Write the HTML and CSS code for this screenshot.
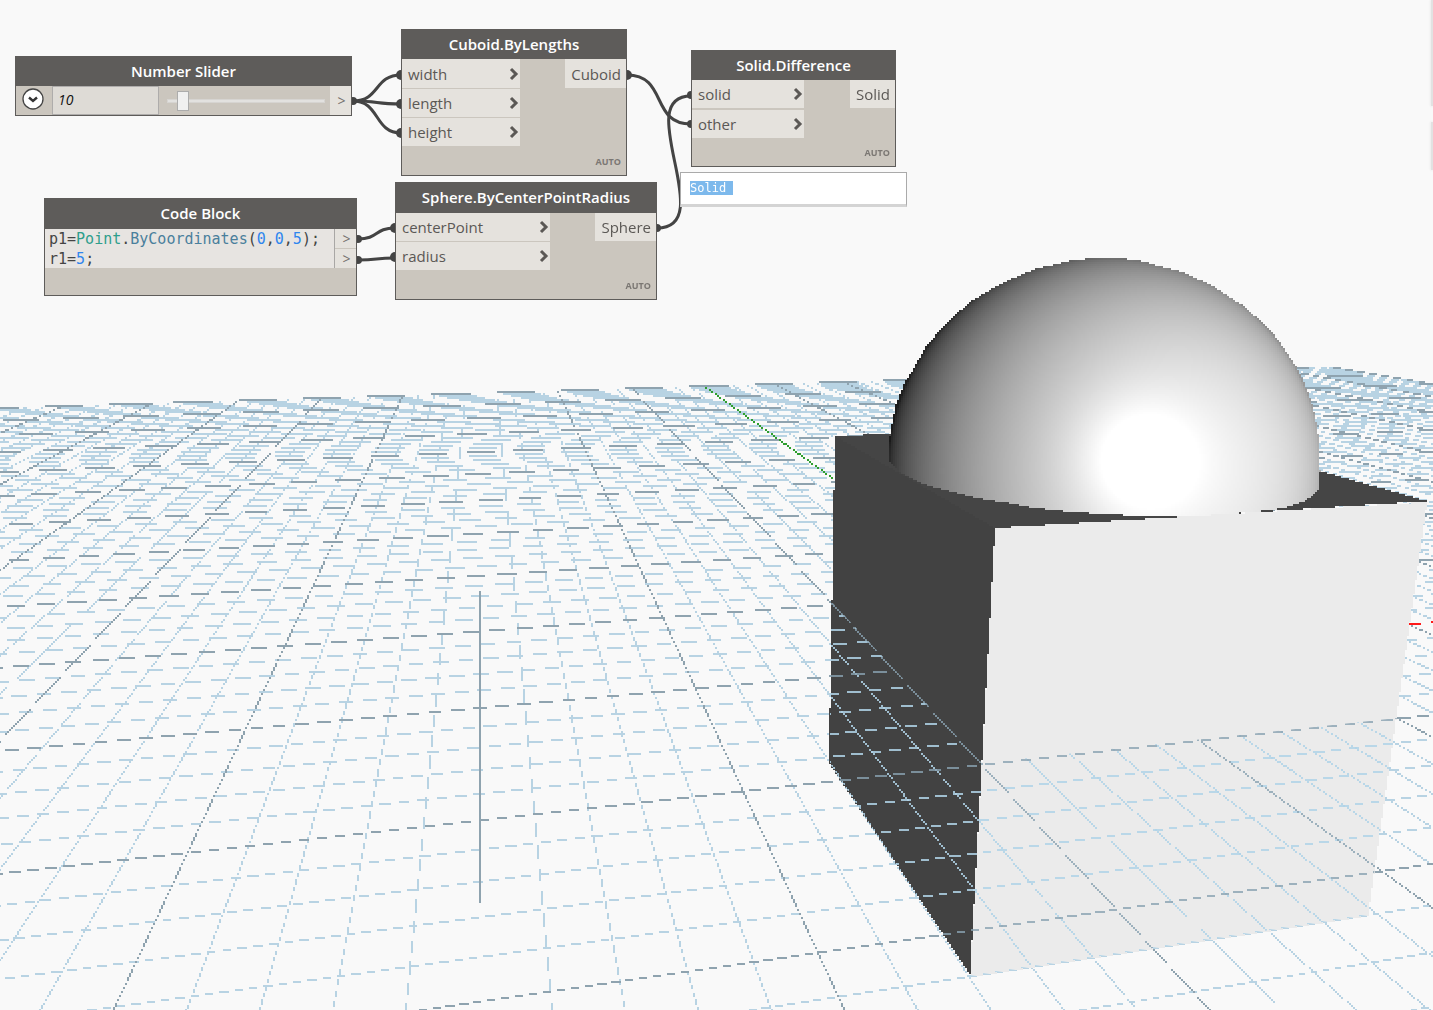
FILE: index.html
```html
<!DOCTYPE html>
<html lang="en">
<head>
<meta charset="utf-8">
<title>Solid.Difference graph</title>
<link rel="stylesheet" href="styles.css">
</head>
<body>
<main class="workspace">
  <canvas class="scene" aria-label="3D preview"></canvas>
  <div class="side-tabs"><span class="side-tab long"></span><span class="side-tab"></span></div>
  <svg class="wires" aria-hidden="true">
    <g class="wire">
      <path d="M353 101C380 101 374 75 401 75"/>
      <path d="M353 101C380 101 374 104 401 104"/>
      <path d="M353 101C380 101 374 133 401 133"/>
      <path d="M358 239C379 239 374 228 395 228"/>
      <path d="M358 260C379 260 374 258 395 258"/>
      <path d="M627 75C668 75 650 124 691 124"/>
      <path d="M657 228C720 228 630 96 691 96"/>
    </g>
    <g class="wire-end">
      <circle cx="353" cy="101" r="4"/><circle cx="358" cy="239" r="4"/><circle cx="358" cy="260" r="4"/>
      <circle cx="401" cy="75" r="5"/><circle cx="401" cy="104" r="5"/><circle cx="401" cy="133" r="5"/>
      <circle cx="395" cy="228" r="5"/><circle cx="395" cy="257" r="5"/>
      <circle cx="627" cy="75" r="5"/><circle cx="657" cy="228" r="4"/>
      <circle cx="691" cy="95" r="4"/><circle cx="691" cy="124" r="4"/>
    </g>
  </svg>

  <section class="node node-slider">
    <h2 class="node-title">Number Slider</h2>
    <div class="slider-body">
      <button class="expander" aria-label="Expand">
        <svg viewBox="0 0 22 22"><circle cx="11" cy="11" r="10" fill="#fff" stroke="#444" stroke-width="1.3"/><path d="M7 9.500L11 13L15 9.500" fill="none" stroke="#333" stroke-width="2.4"/></svg>
      </button>
      <input class="slider-value" type="text" value="10" aria-label="Value">
      <input class="slider-range" type="range" min="0" max="100" value="6" aria-label="Slider">
      <span class="port-arrow">&gt;</span>
    </div>
  </section>

  <section class="node node-code">
    <h2 class="node-title tall">Code Block</h2>
    <div class="code-body">
      <pre class="code">p1=<b>Point</b>.<i>ByCoordinates</i>(<u>0</u>,<u>0</u>,<u>5</u>);
r1=<u>5</u>;</pre>
      <div class="code-ports"><span class="port-arrow">&gt;</span><span class="port-arrow">&gt;</span></div>
    </div>
  </section>

  <section class="node node-cuboid">
    <h2 class="node-title">Cuboid.ByLengths</h2>
    <div class="node-body">
      <ul class="inputs">
        <li>width<svg class="chevron" viewBox="0 0 10 14"><path d="M2 2L7 7L2 12"/></svg></li>
        <li>length<svg class="chevron" viewBox="0 0 10 14"><path d="M2 2L7 7L2 12"/></svg></li>
        <li>height<svg class="chevron" viewBox="0 0 10 14"><path d="M2 2L7 7L2 12"/></svg></li>
      </ul>
      <span class="output">Cuboid</span>
    </div>
    <footer class="lacing">AUTO</footer>
  </section>

  <section class="node node-sphere">
    <h2 class="node-title tall">Sphere.ByCenterPointRadius</h2>
    <div class="node-body">
      <ul class="inputs">
        <li>centerPoint<svg class="chevron" viewBox="0 0 10 14"><path d="M2 2L7 7L2 12"/></svg></li>
        <li>radius<svg class="chevron" viewBox="0 0 10 14"><path d="M2 2L7 7L2 12"/></svg></li>
      </ul>
      <span class="output">Sphere</span>
    </div>
    <footer class="lacing">AUTO</footer>
  </section>

  <section class="node node-solid">
    <h2 class="node-title">Solid.Difference</h2>
    <div class="node-body">
      <ul class="inputs">
        <li>solid<svg class="chevron" viewBox="0 0 10 14"><path d="M2 2L7 7L2 12"/></svg></li>
        <li>other<svg class="chevron" viewBox="0 0 10 14"><path d="M2 2L7 7L2 12"/></svg></li>
      </ul>
      <span class="output">Solid</span>
    </div>
    <footer class="lacing">AUTO</footer>
  </section>

  <input class="preview" type="text" value="Solid " aria-label="Preview value">
</main>
<script src="scene.js"></script>
</body>
</html>
```
FILE: styles.css
```css
* { box-sizing: border-box; }
body { margin: 0; background: #f9f9f9; font-family: "Open Sans", "Noto Sans", sans-serif; font-size: 15px; color: #5b5855; }
.workspace { position: relative; height: 100vh; overflow: hidden; }
.scene, .wires { position: absolute; inset: 0; width: 100%; height: 100%; }
.wire { fill: none; stroke: #444; stroke-width: 3; }
.wire-end { fill: #444; }

.side-tabs { position: absolute; top: 0; right: 0; display: grid; gap: 16px; }
.side-tab { width: 2px; height: 48px; background: #e2e2e2; box-shadow: 0 0 3px #ddd; }
.side-tab.long { height: 106px; }

.node { position: absolute; display: flex; flex-direction: column; background: #cbc6be; border: 1px solid #5e5c5a; }
.node-slider { left: 15px; top: 56px; width: 337px; height: 60px; }
.node-code { left: 44px; top: 198px; width: 313px; height: 98px; }
.node-cuboid { left: 401px; top: 29px; width: 226px; height: 147px; }
.node-sphere { left: 395px; top: 182px; width: 262px; height: 118px; }
.node-solid { left: 691px; top: 50px; width: 205px; height: 117px; }

.node-title { margin: 0; height: 29px; flex: none; background: #5e5c5a; color: #fff; font-size: 15px; font-weight: 600; line-height: 29px; text-align: center; }
.node-title.tall { height: 30px; }

.node-body { display: flex; justify-content: space-between; align-items: flex-start; }
.inputs { margin: 0; padding: 0; list-style: none; display: grid; gap: 1px; }
.inputs li { display: flex; justify-content: space-between; align-items: center; height: 28px; padding: 0 1px 0 6px; background: #e5e2dd; }
.node-cuboid .inputs li, .node-cuboid .output { height: 29px; line-height: 30px; }
.node-cuboid .inputs { width: 118px; gap: 0; }
.node-cuboid .inputs li + li { border-top: 1px solid #cbc6be; }
.node-sphere .inputs { width: 154px; }
.node-solid .inputs { width: 112px; gap: 2px; }
.output { height: 28px; padding: 0 5px 0 6px; line-height: 28px; background: #e5e2dd; }
.chevron { width: 10px; height: 14px; fill: none; stroke: #5b5855; stroke-width: 3; }
.lacing { margin-top: auto; padding: 0 5px 6px; line-height: 14px; font-size: 9px; font-weight: 700; text-align: right; color: #7b7773; }

.slider-body { display: flex; height: 29px; }
.expander { display: flex; align-items: flex-start; width: 36px; padding: 2px 0 0 6px; border: 0; background: none; }
.expander svg { display: block; width: 22px; height: 22px; }
.slider-value { width: 107px; padding: 0 5px 2px; border: 1px solid #aeacab; background: #dedbd6; font: italic 14px "Open Sans", sans-serif; color: #111; }
.slider-range { flex: 1; min-width: 0; margin: 0 5px 0 8px; appearance: none; background: none; }
.slider-range::-webkit-slider-runnable-track { height: 4px; background: #e2e1df; border: 1px solid #d6d4d1; }
.slider-range::-webkit-slider-thumb { appearance: none; width: 12px; height: 20px; margin-top: -9px; background: #f0f0f0; border: 1px solid #acacac; }
.port-arrow { width: 21px; padding: 1px 0 0 2px; background: #e5e2dd; font-size: 14px; line-height: 28px; text-align: center; color: #74716e; }

.code-body { display: flex; }
.code { flex: 1; margin: 0; padding-left: 4px; height: 39px; background: #e7e4e1; border-right: 1px solid #a9a7a5; font: 15px/20px "DejaVu Sans Mono", monospace; color: #444; }
.code b { font-weight: 400; color: #2f9e8c; }
.code i { font-style: normal; color: #4a7f9c; }
.code u { text-decoration: none; color: #2f86ee; }
.code-ports { display: grid; gap: 1px; }
.code-ports .port-arrow { height: 19px; padding: 0 0 0 2px; line-height: 20px; }

.preview { position: absolute; left: 680px; top: 172px; width: 227px; height: 35px; padding: 0 9px 2px; border: 1px solid #aaa; border-bottom: 3px solid #d4d4d4; background: #fff; font: 12px "DejaVu Sans Mono", monospace; color: #444; outline: none; }
.preview::selection { background: #7db9ec; color: #fff; }
```
FILE: scene.js
```js
const canvas = document.querySelector('.scene');
const ctx = canvas.getContext('2d');

// Camera: ground plane with two vanishing points on the horizon.
const CAM = { x0: 479.72, y0: 820.5, vx1: 482, vx2: 5835, h: 227, a: 0.01035, b: 0.0468 };
const EXTENT = 50;
const LIGHT = 'rgb(184,211,227)', DARK = 'rgb(143,163,175)';

function depth(X, Y) { return 1 + (X + 15) * CAM.a + (Y + 5) * CAM.b; }
function project(X, Y) {
  const p = (X + 15) * CAM.a, q = (Y + 5) * CAM.b, w = 1 + p + q;
  return [(CAM.x0 + p * CAM.vx2 + q * CAM.vx1) / w, (CAM.y0 + (p + q) * CAM.h) / w];
}

// Thin line sampled at the centres of 2px cells.
function line(X1, Y1, X2, Y2, color) {
  const near = 0.2, d1 = depth(X1, Y1), d2 = depth(X2, Y2);
  if (d1 < near && d2 < near) return;
  if (d1 < near) { const t = (near - d1) / (d2 - d1); X1 += (X2 - X1) * t; Y1 += (Y2 - Y1) * t; }
  const toCell = p => [(p[0] + 1) / 2, (p[1] + 1) / 2];
  let [ax, ay] = toCell(project(X1, Y1)), [bx, by] = toCell(project(X2, Y2));
  const steep = Math.abs(by - ay) > Math.abs(bx - ax);
  if (steep) { [ax, ay, bx, by] = [ay, ax, by, bx]; }
  if (ax > bx) { [ax, ay, bx, by] = [bx, by, ax, ay]; }
  const m = (by - ay) / (bx - ax), half = 0.3 * Math.sqrt(1 + m * m);
  const limit = Math.max(canvas.width, canvas.height) / 2 + 2;
  ctx.fillStyle = color;
  for (let i = Math.max(0, Math.round(ax)); i < Math.min(limit, Math.round(bx)); i++) {
    const c = ay + m * (i + 0.5 - ax), j = Math.floor(c);
    if (Math.abs(c - j - 0.5) > half) continue;
    if (steep) ctx.fillRect(2 * j - 1, 2 * i - 1, 2, 2);
    else ctx.fillRect(2 * i - 1, 2 * j - 1, 2, 2);
  }
}

function grid(light, dark) {
  for (const major of [false, true]) {
    for (let k = -EXTENT; k <= EXTENT; k++) {
      if ((k % 5 === 0) !== major) continue;
      const c = major ? dark : light;
      line(k, -EXTENT, k, EXTENT, c);
      line(-EXTENT, k, EXTENT, k, c);
    }
  }
}

function path(points) {
  ctx.beginPath();
  points.forEach(([x, y]) => ctx.lineTo(x, y));
  ctx.closePath();
}

// Polygon filled in 2px cells; shade(x, y) gives the colour of a cell.
function fillCells(points, shade) {
  const ys = points.map(p => p[1]);
  for (let y = Math.floor(Math.min(...ys) / 2) * 2; y < Math.max(...ys); y += 2) {
    const hits = [];
    points.forEach(([x1, y1], i) => {
      const [x2, y2] = points[(i + 1) % points.length];
      if ((y1 <= y) !== (y2 <= y)) hits.push(x1 + (x2 - x1) * (y - y1) / (y2 - y1));
    });
    hits.sort((p, q) => p - q);
    for (let k = 0; k + 1 < hits.length; k += 2) {
      const s = Math.floor(hits[k] / 2) * 2 + 1, e = Math.floor(hits[k + 1] / 2) * 2 + 1;
      if (typeof shade === 'string') { ctx.fillStyle = shade; ctx.fillRect(s, y, e - s, 2); }
      else for (let x = s; x < e; x += 2) { ctx.fillStyle = shade(x, y); ctx.fillRect(x, y, 2, 2); }
    }
  }
}

const DOME = [[1092,257],[1119,257],[1141,260],[1182,271],[1211,284],[1242,304],[1269,327],[1284,347],[1299,370],[1309,393],[1315,415],[1319,440],[1320,470],[1319,487],[1313,495],[1304,500],[1285,507],[1254,511],[1211,514],[1180,516],[1140,515],[1072,511],[1035,507],[1008,502],[976,497],[937,487],[918,481],[898,470],[890,462],[888,448],[891,427],[896,403],[904,383],[914,367],[925,347],[945,323],[970,301],[1000,283],[1035,268],[1069,260]];

function domeShade(x, y) {
  const nx = (x - 1104) / 217, ny = (y - 470) / 214;
  const nz = Math.sqrt(Math.max(0, 1 - nx * nx - ny * ny));
  const d = Math.hypot(x - 1135, y - 458) / 62;
  const v = 0.36 + 0.26 * nx + 0.52 * nz + 0.17 * Math.exp(-d * d);
  const g = Math.round(255 * Math.min(1, Math.max(0.07, v)));
  return `rgb(${g},${g},${g})`;
}

function draw() {
  canvas.width = canvas.clientWidth;
  canvas.height = canvas.clientHeight;
  grid(LIGHT, DARK);
  line(0, 0, 0, EXTENT, '#2f9e2f');
  line(0, 0, EXTENT, 0, '#ff1a1a');

  fillCells([[835,435],[890,433],[1105,425],[1320,470],[1427,500],[995,528]], '#454545');
  fillCells([[835,435],[995,527],[970,974],[829,762]], '#424242');
  fillCells(DOME, domeShade);
  fillCells([[995,527],[1427,501],[1368,915],[970,976]], '#ebebeb');

  // The part of the box under the ground plane shows the grid over it.
  ctx.save();
  path([[830,600], [982,763], [1397,718], [1368,915], [970,976], [830,764]]);
  ctx.clip();
  grid('rgba(176,212,232,.85)', 'rgba(138,163,177,.8)');
  ctx.restore();
}

draw();
addEventListener('resize', draw);

const preview = document.querySelector('.preview');
preview.focus();
preview.select();
```
